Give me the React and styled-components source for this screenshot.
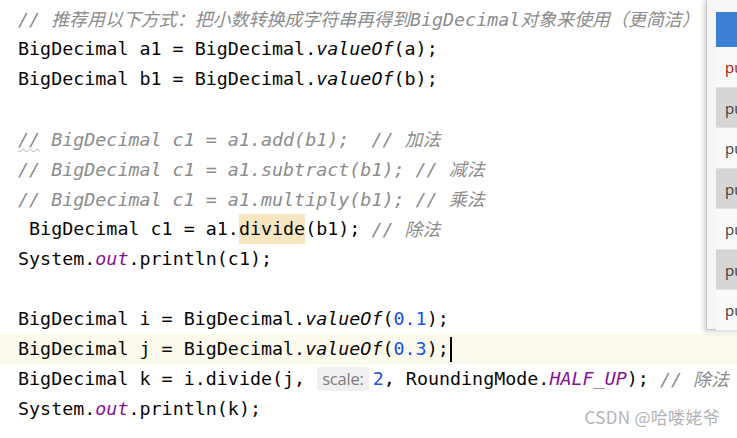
import React from "react";
import styled, { createGlobalStyle } from "styled-components";

const Global = createGlobalStyle`
  html, body { margin: 0; padding: 0; background: #ffffff; }
  body { width: 737px; height: 438px; overflow: hidden; }
`;

const Page = styled.div`
  position: relative;
  width: 737px;
  height: 438px;
  background: #ffffff;
  overflow: hidden;
`;

const Editor = styled.div`
  display: flex;
  flex-direction: column;
  padding-top: 4px;
  font-family: "DejaVu Sans Mono", "Noto Sans CJK SC", monospace;
  font-size: 18.35px;
  color: #080808;
`;

const Line = styled.div`
  height: 30px;
  line-height: 30px;
  padding-left: 18px;
  white-space: pre;
  background: ${(p) => (p.$current ? "#fcfaed" : "transparent")};
  display: flex;
  align-items: center;
`;

const Seg = styled.span`
  white-space: pre;
`;

const Comment = styled.span`
  color: #8c8c8c;
  font-style: italic;
  white-space: pre;
`;

const Cjk = styled.span`
  font-family: "Noto Sans CJK SC", sans-serif;
  font-size: 17.95px;
`;

const Method = styled.span`
  font-style: italic;
`;

const Field = styled.span`
  font-style: italic;
  color: #871094;
`;

const Num = styled.span`
  color: #1750eb;
`;

const Highlight = styled.span`
  background: #f7e6c1;
  display: inline-block;
  height: 30px;
`;

const Squiggle = styled.span`
  text-decoration: underline wavy #b4b4b4;
  text-decoration-thickness: 1px;
  text-underline-offset: 2px;
`;

const Caret = styled.span`
  display: inline-block;
  width: 2px;
  height: 25px;
  background: #000;
  margin-left: 1px;
`;

const Hint = styled.span`
  display: inline-flex;
  align-items: center;
  height: 24px;
  padding: 0 5px;
  margin-left: 1px;
  margin-right: 4px;
  border-radius: 3px;
  background: #f0f0f0;
  color: #7d7d7d;
  font-family: "Open Sans", "Noto Sans", sans-serif;
  font-style: normal;
  font-size: 16.5px;
  letter-spacing: -0.2px;
`;

const Popup = styled.div`
  position: absolute;
  top: -2px;
  left: 706px;
  width: 40px;
  height: 332px;
  background: #f6f6f6;
  border: 1px solid #c9c9c9;
  box-shadow: -2px 2px 5px rgba(0, 0, 0, 0.18);
  padding: 13px 0 0 9px;
  box-sizing: border-box;
  display: flex;
  flex-direction: column;
`;

const PopupHead = styled.div`
  height: 35px;
  background: #3b80d3;
  flex-shrink: 0;
`;

const PopupRow = styled.div`
  height: 40.5px;
  flex-shrink: 0;
  box-sizing: border-box;
  border-bottom: 1px solid #e2e2e2;
  background: ${(p) => (p.$alt ? "#d6d6d6" : "#fafafa")};
  color: ${(p) => (p.$first ? "#b00c0c" : "#3a3a3a")};
  font-family: "Open Sans", "Noto Sans", sans-serif;
  font-size: 15px;
  line-height: 40px;
  padding-left: 9px;
  white-space: nowrap;
  overflow: hidden;
`;

const Watermark = styled.div`
  position: absolute;
  right: 17px;
  bottom: 9px;
  color: #b3b3b3;
  font-family: "Noto Sans CJK SC", "Noto Sans", sans-serif;
  font-size: 17px;
  letter-spacing: 0.3px;
  text-shadow: 0 0 2px #fff;
`;

export default function App() {
  const rows = [0, 1, 2, 3, 4, 5, 6];
  return (
    <Page>
      <Global />
      <Editor>
        <Line>
          <Comment>
            {"// "}
            <Cjk>推荐用以下方式：把小数转换成字符串再得到</Cjk>
            {"BigDecimal"}
            <Cjk>对象来使用（更简洁）</Cjk>
          </Comment>
        </Line>
        <Line>
          <Seg>{"BigDecimal a1 = BigDecimal."}</Seg>
          <Method>valueOf</Method>
          <Seg>{"(a);"}</Seg>
        </Line>
        <Line>
          <Seg>{"BigDecimal b1 = BigDecimal."}</Seg>
          <Method>valueOf</Method>
          <Seg>{"(b);"}</Seg>
        </Line>
        <Line />
        <Line>
          <Comment>
            <Squiggle>{"//"}</Squiggle>
            {" BigDecimal c1 = a1.add(b1);  // "}
            <Cjk>加法</Cjk>
          </Comment>
        </Line>
        <Line>
          <Comment>
            {"// BigDecimal c1 = a1.subtract(b1); // "}
            <Cjk>减法</Cjk>
          </Comment>
        </Line>
        <Line>
          <Comment>
            {"// BigDecimal c1 = a1.multiply(b1); // "}
            <Cjk>乘法</Cjk>
          </Comment>
        </Line>
        <Line>
          <Seg>{" BigDecimal c1 = a1."}</Seg>
          <Highlight>divide</Highlight>
          <Seg>{"(b1); "}</Seg>
          <Comment>
            {"// "}
            <Cjk>除法</Cjk>
          </Comment>
        </Line>
        <Line>
          <Seg>{"System."}</Seg>
          <Field>out</Field>
          <Seg>{".println(c1);"}</Seg>
        </Line>
        <Line />
        <Line>
          <Seg>{"BigDecimal i = BigDecimal."}</Seg>
          <Method>valueOf</Method>
          <Seg>(</Seg>
          <Num>0.1</Num>
          <Seg>);</Seg>
        </Line>
        <Line $current>
          <Seg>{"BigDecimal j = BigDecimal."}</Seg>
          <Method>valueOf</Method>
          <Seg>(</Seg>
          <Num>0.3</Num>
          <Seg>);</Seg>
          <Caret />
        </Line>
        <Line>
          <Seg>{"BigDecimal k = i.divide(j, "}</Seg>
          <Hint>scale:</Hint>
          <Num>2</Num>
          <Seg>{", RoundingMode."}</Seg>
          <Field>HALF_UP</Field>
          <Seg>{"); "}</Seg>
          <Comment>
            {"// "}
            <Cjk>除法</Cjk>
          </Comment>
        </Line>
        <Line>
          <Seg>{"System."}</Seg>
          <Field>out</Field>
          <Seg>{".println(k);"}</Seg>
        </Line>
      </Editor>
      <Popup>
        <PopupHead />
        {rows.map((r) => (
          <PopupRow key={r} $alt={r % 2 === 1} $first={r === 0}>
            public
          </PopupRow>
        ))}
      </Popup>
      <Watermark>CSDN @哈喽姥爷</Watermark>
    </Page>
  );
}
